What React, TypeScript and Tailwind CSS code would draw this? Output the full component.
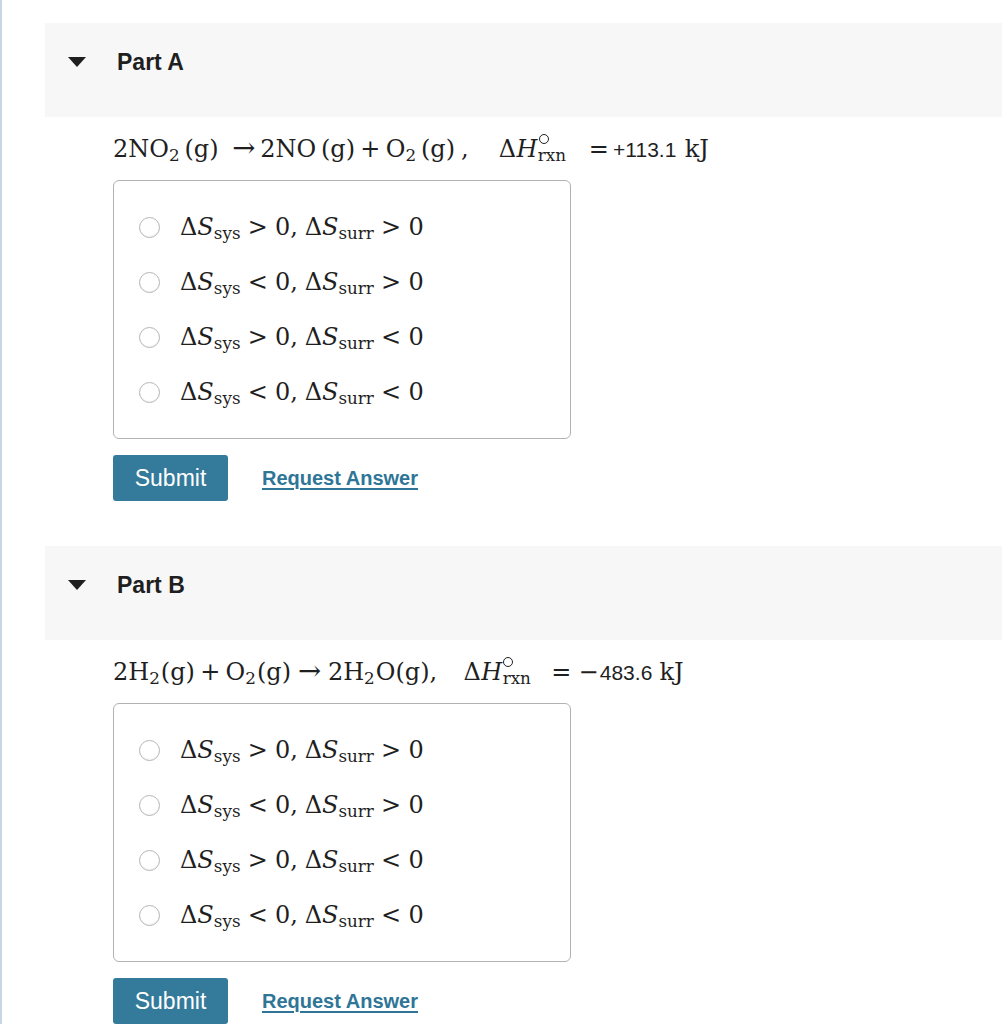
import React from "react";

const serif = "font-['DejaVu_Serif','Liberation_Serif',serif]";
const sans = "font-['Liberation_Sans',Arial,sans-serif]";

const Sub = ({ children }: { children: React.ReactNode }) => (
  <span className="relative top-[0.24em] text-[0.7em]">{children}</span>
);

const Rel = ({ children }: { children: React.ReactNode }) => (
  <span className="mx-[0.3em]">{children}</span>
);

const Arrow = ({ className = "" }: { className?: string }) => (
  <span className={`inline-block text-[1.15em] leading-none ${className}`}>→</span>
);

const Hrxn = () => (
  <span className="inline-flex items-baseline">
    <span>Δ</span>
    <i className="ml-[0.02em]">H</i>
    <span className="relative top-[0.24em] ml-[0.02em] text-[0.7em]">
      <span className="absolute left-[0.05em] top-[-0.48em] w-[10px] h-[10px] rounded-full border-[1.5px] border-[#1f1f1f]" />
      rxn
    </span>
  </span>
);

const Option = ({ a, b }: { a: string; b: string }) => (
  <span className={`${serif} text-[24px] leading-none text-[#1f1f1f] whitespace-nowrap`}>
    <span>Δ</span>
    <i>S</i>
    <Sub>sys</Sub>
    <Rel>{a}</Rel>0,
    <span className="ml-[0.28em]">Δ</span>
    <i>S</i>
    <Sub>surr</Sub>
    <Rel>{b}</Rel>0
  </span>
);

const EquationA = () => (
  <span className="whitespace-nowrap flex items-baseline">
    <span>
      2NO<Sub>2</Sub>
    </span>
    <span className="ml-[0.2em]">(g)</span>
    <Arrow className="ml-[0.5em]" />
    <span className="ml-[0.2em]">2NO</span>
    <span className="ml-[0.2em]">(g)</span>
    <span className="mx-[0.22em]">+</span>
    <span>
      O<Sub>2</Sub>
    </span>
    <span className="ml-[0.2em]">(g)</span>
    <span className="ml-[0.25em]">,</span>
    <span className="ml-[1.25em]">
      <Hrxn />
    </span>
    <span className="ml-[0.95em]">=</span>
    <span className={`${sans} ml-[0.2em] text-[21px]`}>+113.1</span>
    <span className="ml-[0.35em]">kJ</span>
  </span>
);

const EquationB = () => (
  <span className="whitespace-nowrap flex items-baseline">
    <span>
      2H<Sub>2</Sub>
    </span>
    <span className="ml-[0.04em]">(g)</span>
    <span className="mx-[0.22em]">+</span>
    <span>
      O<Sub>2</Sub>
    </span>
    <span className="ml-[0.04em]">(g)</span>
    <Arrow className="mx-[0.25em]" />
    <span>
      2H<Sub>2</Sub>
    </span>
    <span className="ml-[0.04em]">O(g),</span>
    <span className="ml-[1.1em]">
      <Hrxn />
    </span>
    <span className="ml-[0.85em]">=</span>
    <span className="ml-[0.3em]">−</span>
    <span className={`${sans} ml-[0.05em] text-[21px]`}>483.6</span>
    <span className="ml-[0.3em]">kJ</span>
  </span>
);

const options = [
  { a: ">", b: ">" },
  { a: "<", b: ">" },
  { a: ">", b: "<" },
  { a: "<", b: "<" },
];

const Part = ({ title, equation }: { title: string; equation: React.ReactNode }) => (
  <section>
    <div className="h-[94px] bg-[#f7f7f7] flex items-center pb-[16px] pl-[23px]">
      <svg width="18" height="10" viewBox="0 0 18 10">
        <path d="M0 0h18L9 10z" fill="#1f1f1f" />
      </svg>
      <h2 className={`${sans} ml-[31px] text-[23px] font-bold text-[#1f1f1f]`}>{title}</h2>
    </div>
    <div className="pl-[68px]">
      <div className={`h-[63px] flex items-center ${serif} text-[24px] text-[#1f1f1f]`}>{equation}</div>
      <div className="w-[458px] h-[259px] border border-[#b2b2b2] rounded-[6px] py-[19px]">
        {options.map((o, i) => (
          <label key={i} className="h-[55px] flex items-center pl-[25px]">
            <span className="w-[21px] h-[21px] rounded-full border border-[#b5b5b5] bg-white shadow-[inset_0_-1px_1px_rgba(0,0,0,0.05)]" />
            <span className="ml-[20px]">
              <Option a={o.a} b={o.b} />
            </span>
          </label>
        ))}
      </div>
      <div className="mt-[16px] flex items-center h-[46px]">
        <button className={`${sans} w-[115px] h-[46px] bg-[#347a9a] rounded-[3px] text-white text-[23px]`}>
          Submit
        </button>
        <a className={`${sans} ml-[34px] text-[20px] font-bold text-[#2e7598] underline underline-offset-[3px]`}>
          Request Answer
        </a>
      </div>
    </div>
  </section>
);

export default function App() {
  return (
    <div className="min-h-screen bg-white border-l-2 border-[#c8d6e6] pt-[23px] pl-[43px]">
      <Part title="Part A" equation={<EquationA />} />
      <div className="mt-[45px]">
        <Part title="Part B" equation={<EquationB />} />
      </div>
    </div>
  );
}
